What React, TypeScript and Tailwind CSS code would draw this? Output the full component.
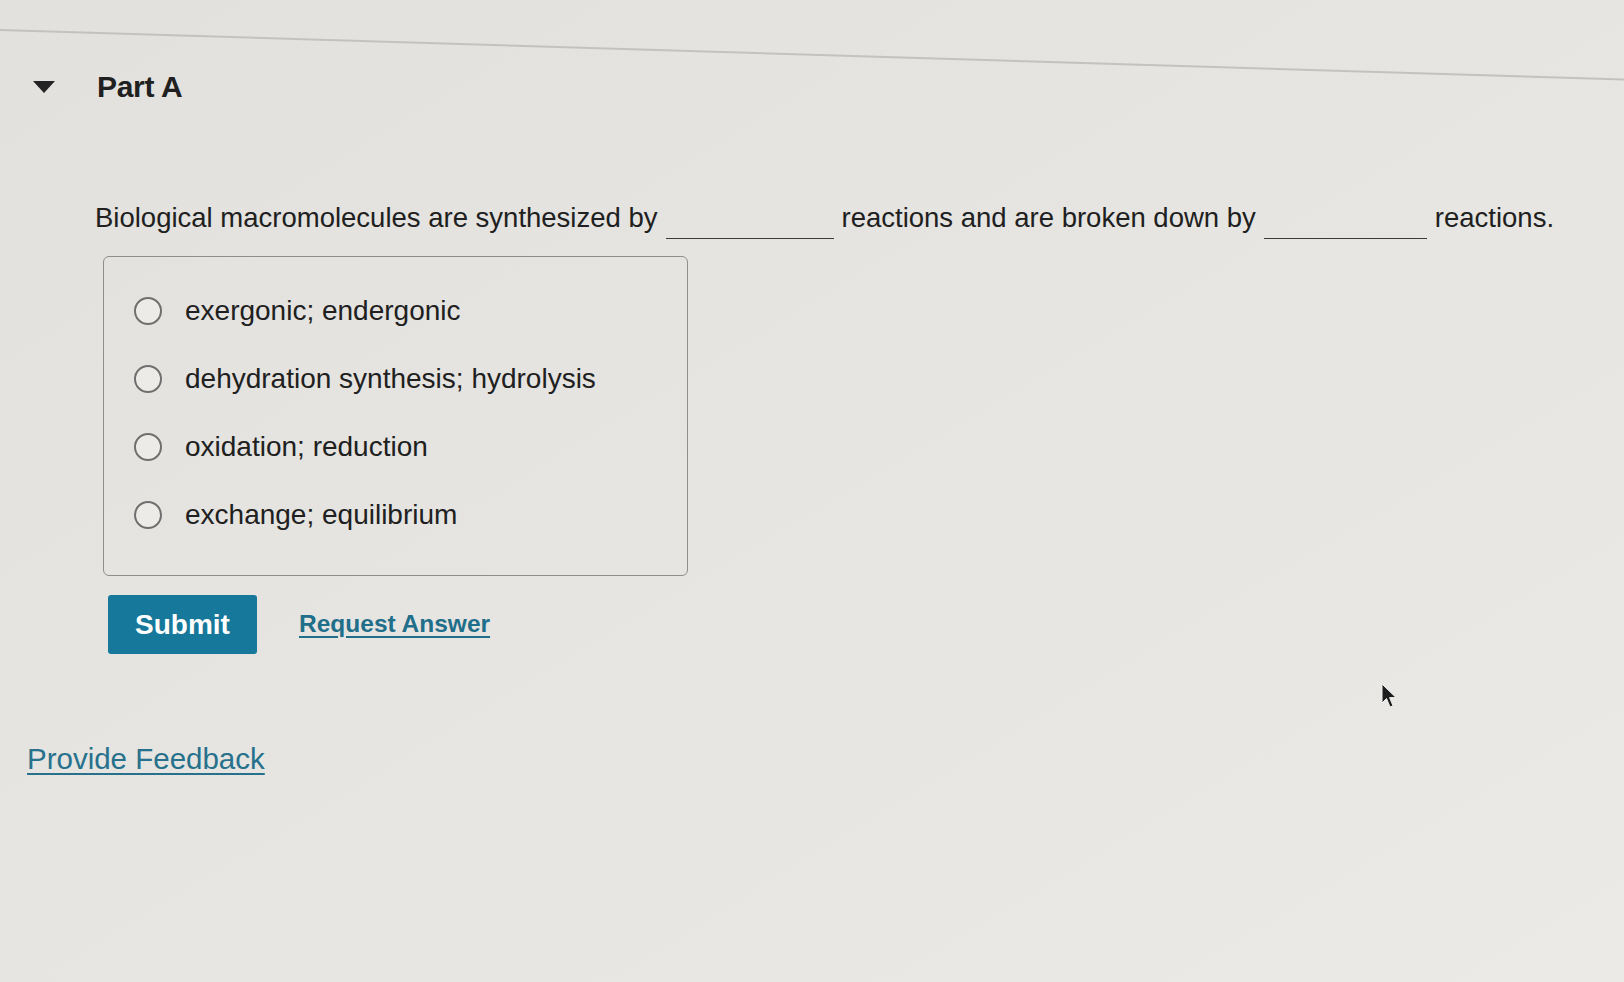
import React from 'react';

const options = [
  'exergonic; endergonic',
  'dehydration synthesis; hydrolysis',
  'oxidation; reduction',
  'exchange; equilibrium',
];

function Blank({ w }: { w: string }) {
  return <span className={`${w} mx-[8px] -mb-[5px] h-[34px] shrink-0 border-b-[1.5px] border-[#3a3a3a]`} />;
}

export default function App() {
  return (
    <div className="relative min-h-screen overflow-hidden bg-gradient-to-br from-[#e2e1dd] via-[#e6e5e1] to-[#ebeae7] font-['Liberation_Sans',Arial,sans-serif] text-[#202020]">
      {/* top separator, slightly tilted like the photo */}
      <div className="pt-[29px]">
        <div className="h-[2px] w-[1660px] origin-top-left rotate-[1.75deg] bg-[#c2c2bf]" />
      </div>

      {/* Part header */}
      <div className="mt-[36px] flex h-[40px] items-center pl-[33px]">
        <svg width="22" height="12" viewBox="0 0 22 12" className="shrink-0">
          <path d="M0 0 L22 0 L11 12 Z" fill="#222" />
        </svg>
        <span className="ml-[42px] text-[30px] font-bold leading-none tracking-[-0.3px]">Part A</span>
      </div>

      {/* question */}
      <div className="mt-[95px] flex items-end pl-[95px] text-[27.5px] leading-[32px] whitespace-nowrap">
        <span>Biological macromolecules are synthesized by</span>
        <Blank w="w-[168px]" />
        <span>reactions and are broken down by</span>
        <Blank w="w-[163px]" />
        <span>reactions.</span>
      </div>

      {/* choices */}
      <div className="ml-[103px] mt-[22px] w-[585px] rounded-[6px] border-[1.5px] border-[#8e8e8c] pb-[26px] pl-[30px] pt-[20px]">
        {options.map((o) => (
          <label key={o} className="flex h-[68px] items-center">
            <span className="h-[28px] w-[28px] shrink-0 rounded-full border-2 border-[#6f6f6f] bg-[#ecebe8]" />
            <span className="ml-[23px] text-[28px] leading-none">{o}</span>
          </label>
        ))}
      </div>

      {/* actions */}
      <div className="ml-[108px] mt-[19px] flex items-center">
        <button className="h-[59px] w-[149px] rounded-[3px] bg-[#16789a] text-[28px] font-bold text-white">
          Submit
        </button>
        <a className="ml-[42px] text-[24.5px] font-bold text-[#1f6e8a] underline decoration-[2px] underline-offset-[4px]">
          Request Answer
        </a>
      </div>

      <div className="ml-[27px] mt-[88px] text-[29.5px] leading-[34px]">
        <a className="text-[#27718c] underline decoration-[2px] underline-offset-[4px]">Provide Feedback</a>
      </div>

      {/* mouse pointer in the photo */}
      <svg width="16" height="26" viewBox="0 0 16 26" className="absolute left-[1381px] top-[683px]">
        <path d="M1 1 L1 20 L5.5 15.5 L9 24 L12 22.8 L8.6 14.6 L15 14.6 Z" fill="#1d1d1d" stroke="#f2f2f2" strokeWidth="1" />
      </svg>
    </div>
  );
}
